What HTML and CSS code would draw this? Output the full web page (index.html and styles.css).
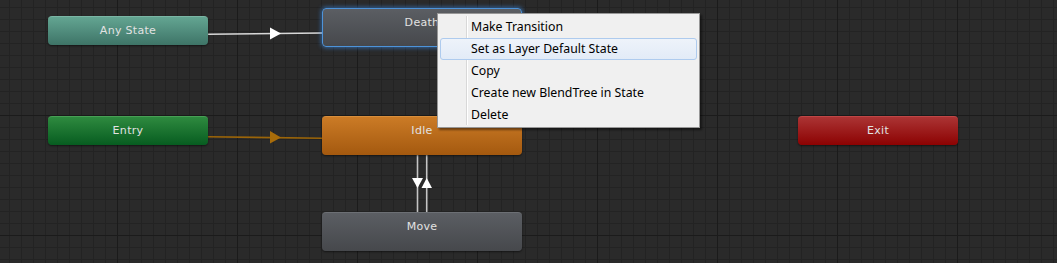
FILE: index.html
```html
<!DOCTYPE html>
<html>
<head>
<meta charset="utf-8">
<link rel="stylesheet" href="styles.css">
</head>
<body>
<div class="graph">
  <svg class="links" width="1057" height="263" viewBox="0 0 1057 263">
    <line x1="208" y1="34.3" x2="322" y2="33" stroke="#d8d8d8" stroke-width="1.6"/>
    <polygon points="270,27.5 281,33.6 270,39.5" fill="#ffffff"/>
    <line x1="208" y1="136.7" x2="322" y2="138.3" stroke="#9a6408" stroke-width="1.6"/>
    <polygon points="270,131 281,137.5 270,143.5" fill="#a86c0a"/>
    <line x1="417.5" y1="155" x2="417.5" y2="212" stroke="#c4c4c4" stroke-width="1.6"/>
    <line x1="426.7" y1="155" x2="426.7" y2="212" stroke="#c4c4c4" stroke-width="1.6"/>
    <polygon points="412,178 423,178 417.5,188" fill="#ffffff"/>
    <polygon points="421.5,188 432,188 426.7,178" fill="#ffffff"/>
  </svg>

  <div class="node any" style="left:48px;top:16px;width:160px;height:29px">Any State</div>
  <div class="node entry" style="left:48px;top:116px;width:160px;height:29px">Entry</div>
  <div class="node exit" style="left:798px;top:116px;width:160px;height:29px">Exit</div>
  <div class="node grey selected" style="left:322px;top:8px;width:200px;height:39px">Death</div>
  <div class="node idle" style="left:322px;top:116px;width:200px;height:39px">Idle</div>
  <div class="node grey" style="left:322px;top:212px;width:200px;height:39px">Move</div>

  <div class="menu">
    <div class="sep"></div>
    <div class="item">Make Transition</div>
    <div class="item hot">Set as Layer Default State</div>
    <div class="item">Copy</div>
    <div class="item">Create new BlendTree in State</div>
    <div class="item">Delete</div>
  </div>
</div>
</body>
</html>
```

FILE: styles.css
```css
html, body {
  margin: 0;
  padding: 0;
  width: 1057px;
  height: 263px;
  overflow: hidden;
  background: #2a2a2a;
}

.graph {
  position: relative;
  width: 1057px;
  height: 263px;
  background-color: #2a2a2a;
  background-image:
    linear-gradient(to right, #1b1b1b 1px, transparent 1px),
    linear-gradient(to bottom, #1b1b1b 1px, transparent 1px),
    linear-gradient(to right, #232323 1px, transparent 1px),
    linear-gradient(to bottom, #232323 1px, transparent 1px);
  background-size: 120px 120px, 120px 120px, 12px 12px, 12px 12px;
  background-position: -3px 0, 0 -5px, 9px 0, 0 7px;
  font-family: "DejaVu Sans", Verdana, sans-serif;
}

.links {
  position: absolute;
  left: 0;
  top: 0;
}

.node {
  position: absolute;
  box-sizing: border-box;
  border-radius: 4px;
  color: #e2e2e2;
  font-size: 11px;
  letter-spacing: 0.3px;
  line-height: 14px;
  padding-top: 7px;
  text-align: center;
  box-shadow: 0 1px 2px rgba(0, 0, 0, 0.5);
}

.any {
  background: linear-gradient(to bottom, #63a592, #3e7467);
  border-top: 1px solid #7bb6a5;
}

.entry {
  background: linear-gradient(to bottom, #2e8a3f, #075c20);
  border-top: 1px solid #47a055;
}

.exit {
  background: linear-gradient(to bottom, #ab3434, #8c0202);
  border-top: 1px solid #c04646;
}

.grey {
  background: linear-gradient(to bottom, #5b5e63, #46484c);
  border-top: 1px solid #6c6f74;
}

.idle {
  background: linear-gradient(to bottom, #cb7b26, #a4590f);
  border-top: 1px solid #d88e3c;
}

.selected {
  border: 1px solid #4d93d9;
  box-shadow: 0 0 4px 1px rgba(60, 140, 230, 0.6);
}

.menu {
  position: absolute;
  left: 437px;
  top: 13px;
  width: 263px;
  height: 115px;
  box-sizing: border-box;
  background: #f0f0f0;
  border: 1px solid #979797;
  box-shadow: 2px 2px 2px rgba(0, 0, 0, 0.45);
  padding-top: 2px;
  font-family: "Noto Sans", "Open Sans", sans-serif;
  font-size: 12.3px;
  color: #000;
}

.sep {
  position: absolute;
  left: 28px;
  top: 2px;
  bottom: 2px;
  width: 1px;
  background: #d8d8d8;
  border-right: 1px solid #fff;
}

.item {
  position: relative;
  height: 22px;
  line-height: 21px;
  padding-left: 31px;
  margin: 0 2px;
  box-sizing: border-box;
}

.item.hot {
  border: 1px solid #aecbee;
  border-radius: 3px;
  background: linear-gradient(to bottom, #eef3fa, #e2ebf7);
  padding-left: 30px;
  line-height: 20px;
}
```
